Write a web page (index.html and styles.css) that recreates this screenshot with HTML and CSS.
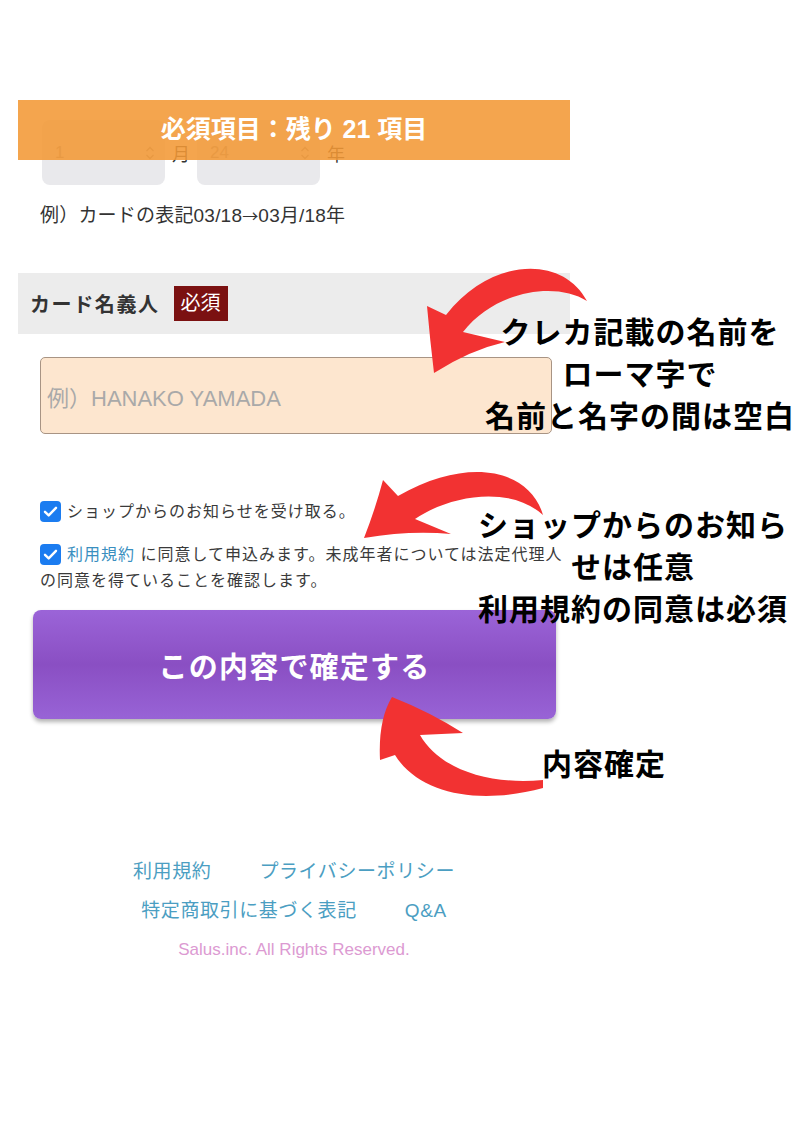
FILE: index.html
```html
<!DOCTYPE html>
<html lang="ja">
<head>
<meta charset="utf-8">
<title>カード情報入力</title>
<link rel="stylesheet" href="styles.css">
</head>
<body>
<div class="page">
  <div class="date-row">
    <div class="select">
      <span class="sel-val">1</span>
      <svg class="chev" width="10" height="14" viewBox="0 0 10 14"><path d="M1.5 5L5 1.5L8.5 5M1.5 9L5 12.5L8.5 9"/></svg>
    </div>
    <span class="unit">月</span>
    <div class="select">
      <span class="sel-val">24</span>
      <svg class="chev" width="10" height="14" viewBox="0 0 10 14"><path d="M1.5 5L5 1.5L8.5 5M1.5 9L5 12.5L8.5 9"/></svg>
    </div>
    <span class="unit">年</span>
  </div>

  <p class="example">例）カードの表記03/18<span class="cjk">→</span>03月/18年</p>

  <div class="section-head">
    <span class="label">カード名義人</span>
    <span class="badge">必須</span>
  </div>

  <div class="name-input"><span class="placeholder">例）HANAKO YAMADA</span></div>

  <div class="checks">
    <div class="check">
      <svg class="box" width="21" height="21" viewBox="0 0 21 21"><rect width="21" height="21" rx="4"/><path d="M5 10.8l3.7 3.6L16 6.8"/></svg>ショップからのお知らせを受け取る。
    </div>
    <div class="check check-terms">
      <svg class="box" width="21" height="21" viewBox="0 0 21 21"><rect width="21" height="21" rx="4"/><path d="M5 10.8l3.7 3.6L16 6.8"/></svg><a class="terms">利用規約</a> に同意して申込みます。未成年者については法定代理人<br>の同意を得ていることを確認します。
    </div>
  </div>

  <button class="confirm">この内容で確定する</button>

  <footer class="footer">
    <div class="links"><a>利用規約</a><a>プライバシーポリシー</a></div>
    <div class="links"><a>特定商取引に基づく表記</a><a>Q&amp;A</a></div>
    <div class="copy">Salus.inc. All Rights Reserved.</div>
  </footer>

  <div class="banner">必須項目：残り 21 項目</div>
</div>

<svg class="arrows" width="800" height="1132" viewBox="0 0 800 1132">
  <path d="M587 301 C562 254 490 258 446 315 L427 306 Q430 340 434 373 Q470 350 505 342 L463 332 C495 291 555 281 587 301 Z"/>
  <path d="M543 515 C530 470 470 455 398 496 L383 480 Q375 510 364 538 Q410 530 451 534 L415 519 C450 495 510 485 543 515 Z"/>
  <path d="M392 697 Q430 712 463 733 L420 735 C440 770 490 785 543 780 L543 788 C480 805 420 795 395 755 L380 760 Q378 720 392 697 Z"/>
</svg>

<div class="note note1">クレカ記載の名前を<br>ローマ字で<br>名前と名字の間は空白</div>
<div class="note note2">ショップからのお知ら<br>せは任意<br>利用規約の同意は必須</div>
<div class="note note3">内容確定</div>
</body>
</html>
```

FILE: styles.css
```css
html, body {
  margin: 0;
  padding: 0;
  background: #ffffff;
}

body {
  position: relative;
  width: 800px;
  height: 1132px;
  overflow: hidden;
  font-family: "Liberation Sans", "Noto Sans CJK JP", sans-serif;
  color: #333333;
}

.page {
  position: relative;
  width: 552px;
  margin-left: 18px;
  padding-top: 120px;
}

/* date selects */
.date-row {
  display: flex;
  align-items: center;
  gap: 7px;
  padding-left: 24px;
}

.select {
  width: 123px;
  height: 65px;
  box-sizing: border-box;
  background: #e9e9ec;
  border-radius: 8px;
  display: flex;
  align-items: center;
  justify-content: space-between;
  padding: 0 10px 0 13px;
}

.sel-val {
  font-size: 17px;
  color: #9c9c9c;
}

.chev path {
  fill: none;
  stroke: #9a9a9a;
  stroke-width: 1.3;
}

.unit {
  font-size: 18px;
  color: #333333;
}

.example {
  margin: 17px 0 0 22px;
  font-size: 19px;
  line-height: 26px;
  letter-spacing: 0.2px;
  color: #333333;
}

.cjk {
  font-family: "Noto Sans CJK JP", sans-serif;
  font-size: 16px;
}

/* section header */
.section-head {
  margin-top: 44px;
  height: 61px;
  background: #ececec;
  display: flex;
  align-items: center;
  padding-left: 12px;
}

.label {
  font-size: 20px;
  font-weight: bold;
  letter-spacing: 1.6px;
  color: #333333;
}

.badge {
  margin-left: 14px;
  background: #7b1111;
  color: #ffffff;
  font-size: 20px;
  height: 35px;
  line-height: 35px;
  padding: 0 7px;
}

/* name input */
.name-input {
  margin: 23px 0 0 22px;
  width: 512px;
  height: 77px;
  box-sizing: border-box;
  background: #fde6cf;
  border: 1.5px solid #a89484;
  border-radius: 5px;
  display: flex;
  align-items: center;
  padding-left: 6px;
}

.placeholder {
  font-size: 22px;
  color: #a9a9a9;
}

/* checkboxes */
.checks {
  margin: 65px 0 0 22px;
  font-size: 16px;
  line-height: 26px;
  letter-spacing: 1px;
  color: #3a3a3a;
}

.check-terms {
  margin-top: 17px;
}

.box {
  vertical-align: -5px;
  margin-right: 6px;
}

.box rect {
  fill: #1b7cf0;
}

.box path {
  fill: none;
  stroke: #ffffff;
  stroke-width: 2.4;
  stroke-linecap: round;
  stroke-linejoin: round;
}

.terms {
  color: #3a8fbf;
}

/* confirm button */
.confirm {
  display: block;
  margin: 16px 0 0 15px;
  width: 523px;
  height: 109px;
  border: 0;
  border-radius: 8px;
  background: linear-gradient(#9b64d8, #8a4fc3 50%, #9863d6);
  color: #ffffff;
  font-family: "Noto Sans CJK JP", sans-serif;
  font-size: 29px;
  font-weight: bold;
  letter-spacing: 1.2px;
  box-shadow: 0 3px 4px rgba(0, 0, 0, 0.3);
}

/* footer */
.footer {
  margin-top: 133px;
  text-align: center;
}

.links {
  display: flex;
  justify-content: center;
  gap: 48px;
  font-size: 19px;
  line-height: 39px;
}

.links a {
  color: #4b9ec2;
  letter-spacing: 0.6px;
}

.copy {
  font-size: 17px;
  line-height: 39px;
  color: #dc9ad2;
}

.banner {
  position: absolute;
  top: 100px;
  left: 0;
  width: 100%;
  height: 60px;
  background: rgba(243, 152, 54, 0.88);
  color: #ffffff;
  font-family: "Liberation Sans", "Noto Sans CJK JP", sans-serif;
  font-size: 25px;
  font-weight: bold;
  display: flex;
  align-items: center;
  justify-content: center;
  padding-bottom: 6px;
  box-sizing: border-box;
}

/* annotation overlay */
.arrows {
  position: absolute;
  top: 0;
  left: 0;
  pointer-events: none;
}

.arrows path {
  fill: #f23232;
}

.note {
  position: absolute;
  font-family: "Noto Sans CJK JP", sans-serif;
  font-weight: bold;
  font-size: 30px;
  line-height: 42px;
  letter-spacing: 1px;
  color: #000000;
  text-align: center;
}

.note1 {
  left: 480px;
  top: 309px;
  width: 320px;
}

.note2 {
  left: 473px;
  top: 502px;
  width: 320px;
}

.note3 {
  left: 538px;
  top: 741px;
  width: 132px;
}
```
